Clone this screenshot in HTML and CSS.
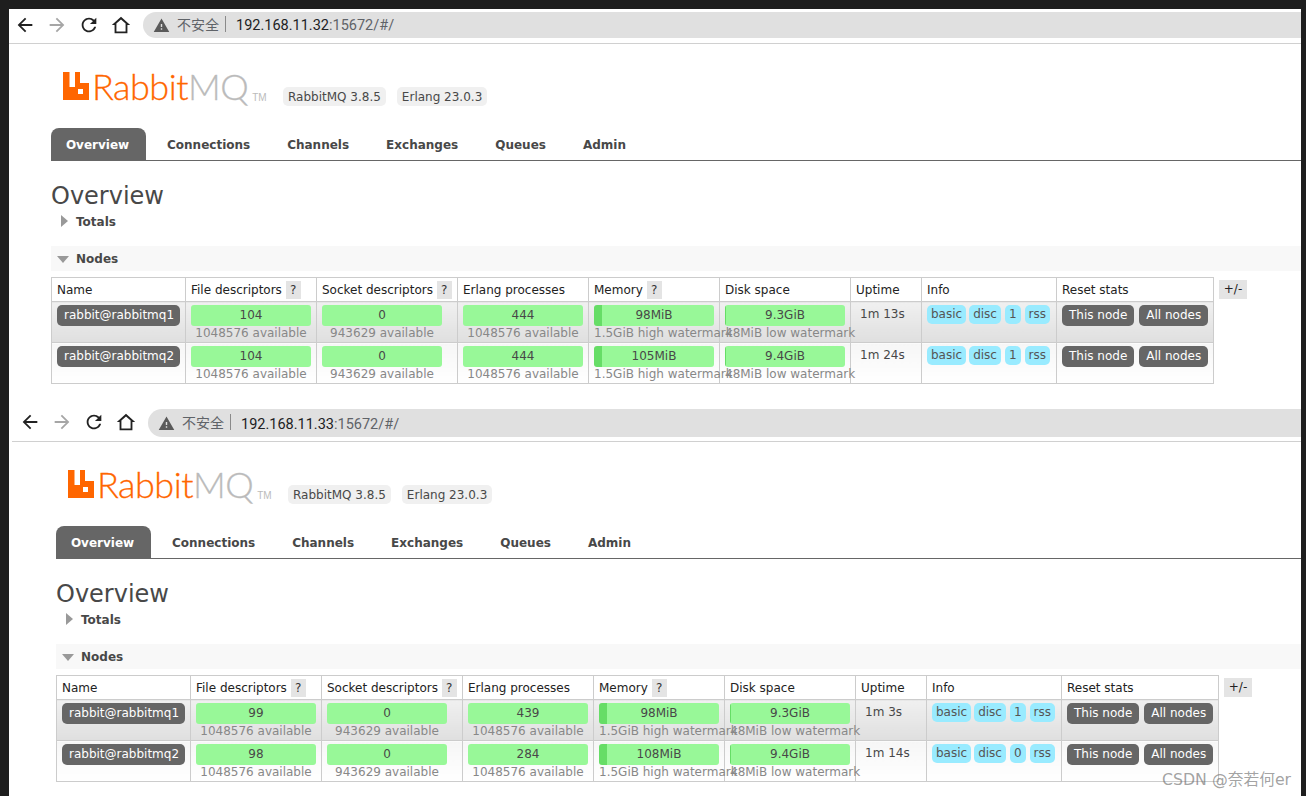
FILE: index.html
```html
<!DOCTYPE html>
<html lang="zh">
<head>
<meta charset="utf-8">
<title>RabbitMQ Overview</title>
<link rel="stylesheet" href="styles.css">
</head>
<body>
<div class="frame">

<section class="win">
  <div class="toolbar">
    <svg class="ico" viewBox="0 0 24 24"><path d="M20 11H7.83l5.59-5.59L12 4l-8 8 8 8 1.41-1.41L7.83 13H20v-2z"/></svg>
    <svg class="ico off" viewBox="0 0 24 24"><path d="M4 11h12.17l-5.59-5.59L12 4l8 8-8 8-1.41-1.41L16.17 13H4v-2z"/></svg>
    <svg class="ico" viewBox="0 0 24 24"><path d="M17.65 6.35A7.958 7.958 0 0 0 12 4c-4.42 0-7.99 3.58-7.99 8s3.57 8 7.99 8c3.73 0 6.84-2.55 7.73-6h-2.08A5.99 5.99 0 0 1 12 18c-3.31 0-6-2.69-6-6s2.69-6 6-6c1.66 0 3.14.69 4.22 1.78L13 11h7V4l-2.35 2.35z"/></svg>
    <svg class="ico" viewBox="0 0 24 24"><path fill-rule="evenodd" d="M12 3 2 12h3v9h14v-9h3zM12 5.9l5 4.5V19H7v-8.6z"/></svg>
    <div class="pill">
      <svg class="warn" viewBox="0 0 24 24"><path d="M1 21h22L12 2 1 21zm12-3h-2v-2h2v2zm0-4h-2v-4h2v4z"/></svg>
      <span class="insecure">不安全</span>
      <span class="url">192.168.11.32<span class="url-dim">:15672/#/</span></span>
    </div>
  </div>
  <div class="content">
    <header class="brand">
      <div class="logo">
        <svg class="logo-mark" viewBox="0 0 26 28"><path fill-rule="evenodd" d="M0 0h6.5v15H12V0h5v11h9v17H0zM15 17v5h5v-5z"/></svg>
        <span class="logo-text">Rabbit<span class="logo-mq">MQ</span></span><span class="logo-tm">TM</span>
      </div>
      <span class="version">RabbitMQ 3.8.5</span>
      <span class="version">Erlang 23.0.3</span>
    </header>
    <nav class="tabs">
      <a class="tab active">Overview</a><a class="tab">Connections</a><a class="tab">Channels</a><a class="tab">Exchanges</a><a class="tab">Queues</a><a class="tab">Admin</a>
    </nav>
    <h1 class="title">Overview</h1>
    <div class="fold"><span class="tri-right"></span>Totals</div>
    <div class="fold open"><span class="tri-down"></span>Nodes</div>
    <div class="table-row">
      <table class="nodes">
        <colgroup><col class="c1"><col class="c2"><col class="c3"><col class="c2"><col class="c2"><col class="c2"><col class="c4"><col class="c5"><col class="c6"></colgroup>
        <thead><tr>
          <th>Name</th><th>File descriptors <span class="help">?</span></th><th>Socket descriptors <span class="help">?</span></th><th>Erlang processes</th><th>Memory <span class="help">?</span></th><th>Disk space</th><th>Uptime</th><th>Info</th><th>Reset stats</th>
        </tr></thead>
        <tbody>
          <tr class="odd">
            <td><span class="btn name">rabbit@rabbitmq1</span></td>
            <td><div class="bar">104</div><div class="sub">1048576 available</div></td>
            <td><div class="bar">0</div><div class="sub">943629 available</div></td>
            <td><div class="bar">444</div><div class="sub">1048576 available</div></td>
            <td><div class="bar mem">98MiB</div><div class="sub">1.5GiB high watermark</div></td>
            <td><div class="bar disk">9.3GiB</div><div class="sub">48MiB low watermark</div></td>
            <td class="up">1m 13s</td>
            <td class="info"><span class="tag">basic</span><span class="tag">disc</span><span class="tag">1</span><span class="tag">rss</span></td>
            <td class="reset"><span class="btn">This node</span><span class="btn">All nodes</span></td>
          </tr>
          <tr class="even">
            <td><span class="btn name">rabbit@rabbitmq2</span></td>
            <td><div class="bar">104</div><div class="sub">1048576 available</div></td>
            <td><div class="bar">0</div><div class="sub">943629 available</div></td>
            <td><div class="bar">444</div><div class="sub">1048576 available</div></td>
            <td><div class="bar mem">105MiB</div><div class="sub">1.5GiB high watermark</div></td>
            <td><div class="bar disk">9.4GiB</div><div class="sub">48MiB low watermark</div></td>
            <td class="up">1m 24s</td>
            <td class="info"><span class="tag">basic</span><span class="tag">disc</span><span class="tag">1</span><span class="tag">rss</span></td>
            <td class="reset"><span class="btn">This node</span><span class="btn">All nodes</span></td>
          </tr>
        </tbody>
      </table>
      <span class="plus">+/-</span>
    </div>
  </div>
</section>

<section class="win second">
  <div class="toolbar">
    <svg class="ico" viewBox="0 0 24 24"><path d="M20 11H7.83l5.59-5.59L12 4l-8 8 8 8 1.41-1.41L7.83 13H20v-2z"/></svg>
    <svg class="ico off" viewBox="0 0 24 24"><path d="M4 11h12.17l-5.59-5.59L12 4l8 8-8 8-1.41-1.41L16.17 13H4v-2z"/></svg>
    <svg class="ico" viewBox="0 0 24 24"><path d="M17.65 6.35A7.958 7.958 0 0 0 12 4c-4.42 0-7.99 3.58-7.99 8s3.57 8 7.99 8c3.73 0 6.84-2.55 7.73-6h-2.08A5.99 5.99 0 0 1 12 18c-3.31 0-6-2.69-6-6s2.69-6 6-6c1.66 0 3.14.69 4.22 1.78L13 11h7V4l-2.35 2.35z"/></svg>
    <svg class="ico" viewBox="0 0 24 24"><path fill-rule="evenodd" d="M12 3 2 12h3v9h14v-9h3zM12 5.9l5 4.5V19H7v-8.6z"/></svg>
    <div class="pill">
      <svg class="warn" viewBox="0 0 24 24"><path d="M1 21h22L12 2 1 21zm12-3h-2v-2h2v2zm0-4h-2v-4h2v4z"/></svg>
      <span class="insecure">不安全</span>
      <span class="url">192.168.11.33<span class="url-dim">:15672/#/</span></span>
    </div>
  </div>
  <div class="content">
    <header class="brand">
      <div class="logo">
        <svg class="logo-mark" viewBox="0 0 26 28"><path fill-rule="evenodd" d="M0 0h6.5v15H12V0h5v11h9v17H0zM15 17v5h5v-5z"/></svg>
        <span class="logo-text">Rabbit<span class="logo-mq">MQ</span></span><span class="logo-tm">TM</span>
      </div>
      <span class="version">RabbitMQ 3.8.5</span>
      <span class="version">Erlang 23.0.3</span>
    </header>
    <nav class="tabs">
      <a class="tab active">Overview</a><a class="tab">Connections</a><a class="tab">Channels</a><a class="tab">Exchanges</a><a class="tab">Queues</a><a class="tab">Admin</a>
    </nav>
    <h1 class="title">Overview</h1>
    <div class="fold"><span class="tri-right"></span>Totals</div>
    <div class="fold open"><span class="tri-down"></span>Nodes</div>
    <div class="table-row">
      <table class="nodes">
        <colgroup><col class="c1"><col class="c2"><col class="c3"><col class="c2"><col class="c2"><col class="c2"><col class="c4"><col class="c5"><col class="c6"></colgroup>
        <thead><tr>
          <th>Name</th><th>File descriptors <span class="help">?</span></th><th>Socket descriptors <span class="help">?</span></th><th>Erlang processes</th><th>Memory <span class="help">?</span></th><th>Disk space</th><th>Uptime</th><th>Info</th><th>Reset stats</th>
        </tr></thead>
        <tbody>
          <tr class="odd">
            <td><span class="btn name">rabbit@rabbitmq1</span></td>
            <td><div class="bar">99</div><div class="sub">1048576 available</div></td>
            <td><div class="bar">0</div><div class="sub">943629 available</div></td>
            <td><div class="bar">439</div><div class="sub">1048576 available</div></td>
            <td><div class="bar mem">98MiB</div><div class="sub">1.5GiB high watermark</div></td>
            <td><div class="bar disk">9.3GiB</div><div class="sub">48MiB low watermark</div></td>
            <td class="up">1m 3s</td>
            <td class="info"><span class="tag">basic</span><span class="tag">disc</span><span class="tag">1</span><span class="tag">rss</span></td>
            <td class="reset"><span class="btn">This node</span><span class="btn">All nodes</span></td>
          </tr>
          <tr class="even">
            <td><span class="btn name">rabbit@rabbitmq2</span></td>
            <td><div class="bar">98</div><div class="sub">1048576 available</div></td>
            <td><div class="bar">0</div><div class="sub">943629 available</div></td>
            <td><div class="bar">284</div><div class="sub">1048576 available</div></td>
            <td><div class="bar mem">108MiB</div><div class="sub">1.5GiB high watermark</div></td>
            <td><div class="bar disk">9.4GiB</div><div class="sub">48MiB low watermark</div></td>
            <td class="up">1m 14s</td>
            <td class="info"><span class="tag">basic</span><span class="tag">disc</span><span class="tag">0</span><span class="tag">rss</span></td>
            <td class="reset"><span class="btn">This node</span><span class="btn">All nodes</span></td>
          </tr>
        </tbody>
      </table>
      <span class="plus">+/-</span>
    </div>
  </div>
</section>

</div>
<div class="watermark">CSDN @奈若何er</div>
</body>
</html>
```

FILE: styles.css
```css
* { box-sizing: border-box; }
html, body { height: 100%; }
body {
  margin: 0;
  padding: 9px 5px 0 9px;
  background: #1e1e1e;
  font-family: "DejaVu Sans", Verdana, sans-serif;
  font-size: 12px;
  color: #484848;
  overflow: hidden;
}
.frame { background: #fff; height: 100%; overflow: hidden; }

.win { height: 398px; }
.win.second { margin-left: 3px; }

.toolbar {
  height: 35px;
  border-bottom: 1px solid #d0d0d0;
  display: flex;
  align-items: flex-start;
  padding: 3px 0 0 5px;
}
.second .toolbar { padding: 2px 0 0 7px; }
.ico { width: 22px; height: 22px; margin: 2px 10px 0 0; fill: #222; flex: none; }
.ico.off { fill: #a6a6a6; }
.pill {
  flex: 1;
  height: 26px;
  margin-left: 1px;
  background: #e0e0e0;
  border-radius: 14px 0 0 14px;
  display: flex;
  align-items: center;
  padding-left: 10px;
  font-family: Roboto, "Noto Sans CJK SC", sans-serif;
}
.second .pill { height: 28px; }
.warn { width: 17px; height: 17px; fill: #5a5a5a; flex: none; }
.insecure {
  margin: 0 0 2px 7px;
  padding-right: 6px;
  border-right: 1px solid #8a8a8a;
  font-size: 14px;
  line-height: 16px;
  color: #5f6368;
  font-family: "Noto Sans CJK SC", sans-serif;
}
.url { margin-left: 10px; font-size: 14.5px; color: #202124; }
.second .url { padding-top: 2px; }
.url-dim { color: #5f6368; }

.content { padding: 28px 0 0 42px; }
.second .content { padding-left: 44px; }

.brand { height: 56px; display: flex; align-items: flex-start; }
.logo { width: 220px; margin-left: 12px; height: 40px; display: flex; align-items: flex-start; flex: none; }
.logo-mark { width: 26px; height: 28px; fill: #f60; flex: none; margin-right: 3px; }
.logo-text {
  font-family: Lato, "Open Sans", sans-serif;
  font-weight: 300;
  font-size: 36px;
  line-height: 28px;
  color: #f60;
  letter-spacing: -0.5px;
  -webkit-text-stroke: 0.3px currentColor;
}
.logo-mq { color: #bbb; }
.logo-tm { font-family: "Liberation Sans", sans-serif; font-size: 10px; color: #bbb; margin: 20px 0 0 4px; }
.version {
  margin: 15px 11px 0 0;
  height: 19px;
  line-height: 20px;
  padding: 0 5px;
  background: #f0f0f0;
  border-radius: 5px;
  white-space: nowrap;
  flex: none;
}

.tabs { height: 33px; display: flex; border-bottom: 1px solid #666; gap: 7px; }
.tab {
  height: 32px;
  line-height: 35px;
  padding: 0 16px 0 14px;
  font-weight: bold;
  font-size: 12px;
  color: #484848;
  border-radius: 8px 8px 0 0;
  white-space: nowrap;
}
.tab.active { background: #666; color: #fff; width: 95px; text-align: center; padding: 0 2px 0 0; }

.title {
  margin: 21px 0 0;
  font-size: 24px;
  line-height: 28px;
  font-weight: normal;
  color: #484848;
}
.fold {
  font-weight: bold;
  font-size: 12px;
  height: 25px;
  line-height: 27px;
  position: relative;
  padding-left: 25px;
  margin-top: -1px;
}
.fold.open { margin-top: 12px; background: #f8f8f8; }
.tri-right {
  position: absolute; left: 10px; top: 6px;
  border-left: 7px solid #999; border-top: 6px solid transparent; border-bottom: 6px solid transparent;
}
.tri-down {
  position: absolute; left: 6px; top: 10px;
  border-top: 7px solid #999; border-left: 6px solid transparent; border-right: 6px solid transparent;
}

.table-row { display: flex; align-items: flex-start; margin-top: 6px; }
.nodes { border-collapse: collapse; table-layout: fixed; width: 1163px; flex: none; }
.c1 { width: 134px; } .c2 { width: 131px; } .c3 { width: 141px; }
.c4 { width: 71px; } .c5 { width: 135px; } .c6 { width: 157px; }
.nodes th, .nodes td { border: 1px solid #ccc; vertical-align: top; }
.nodes th {
  height: 24px;
  font-weight: normal;
  text-align: left;
  color: #222;
  padding: 3px 5px 0;
  line-height: 19px;
  white-space: nowrap;
}
.nodes td { height: 41px; padding: 3px 5px 0; white-space: nowrap; }
.odd td { background: linear-gradient(#f0f0f0, #dfdfdf); }
.even td { background: linear-gradient(#f6f6f6, #fff); }
.help {
  display: inline-block;
  width: 15px;
  height: 18px;
  line-height: 18px;
  text-align: center;
  background: #e4e4e4;
  color: #333;
}
.bar {
  width: 120px;
  height: 21px;
  line-height: 21px;
  background: #98f898;
  border-radius: 3px;
  text-align: center;
}
.bar.mem { background: linear-gradient(90deg, #66dd66 8px, #98f898 8px); }
.bar.disk { background: linear-gradient(90deg, #66dd66 1px, #98f898 1px); }
.sub { width: 120px; text-align: center; color: #888; line-height: 14px; }
.btn {
  display: inline-block;
  height: 21px;
  line-height: 21px;
  background: #666;
  color: #fff;
  border-radius: 5px;
  padding: 0 7px;
}
.btn.name { padding-right: 6px; }
.reset .btn + .btn { margin-left: 5px; }
.nodes td.up { line-height: 19px; padding-left: 9px; }
.tag {
  display: inline-block;
  height: 19px;
  line-height: 19px;
  padding: 0 4px;
  background: #99ebff;
  border-radius: 5px;
  color: #555;
}
.tag + .tag { margin-left: 4px; }
.tag:first-child { margin-right: -1px; }
.plus {
  margin: 3px 0 0 5px;
  width: 28px;
  height: 19px;
  line-height: 19px;
  text-align: center;
  background: #e4e4e4;
  color: #222;
}
.watermark {
  position: absolute;
  left: 1162px;
  top: 770px;
  font-family: "DejaVu Sans", "Noto Sans CJK SC", sans-serif;
  font-size: 15.75px;
  line-height: 20px;
  color: rgba(110, 110, 110, 0.65);
  white-space: nowrap;
}
```
